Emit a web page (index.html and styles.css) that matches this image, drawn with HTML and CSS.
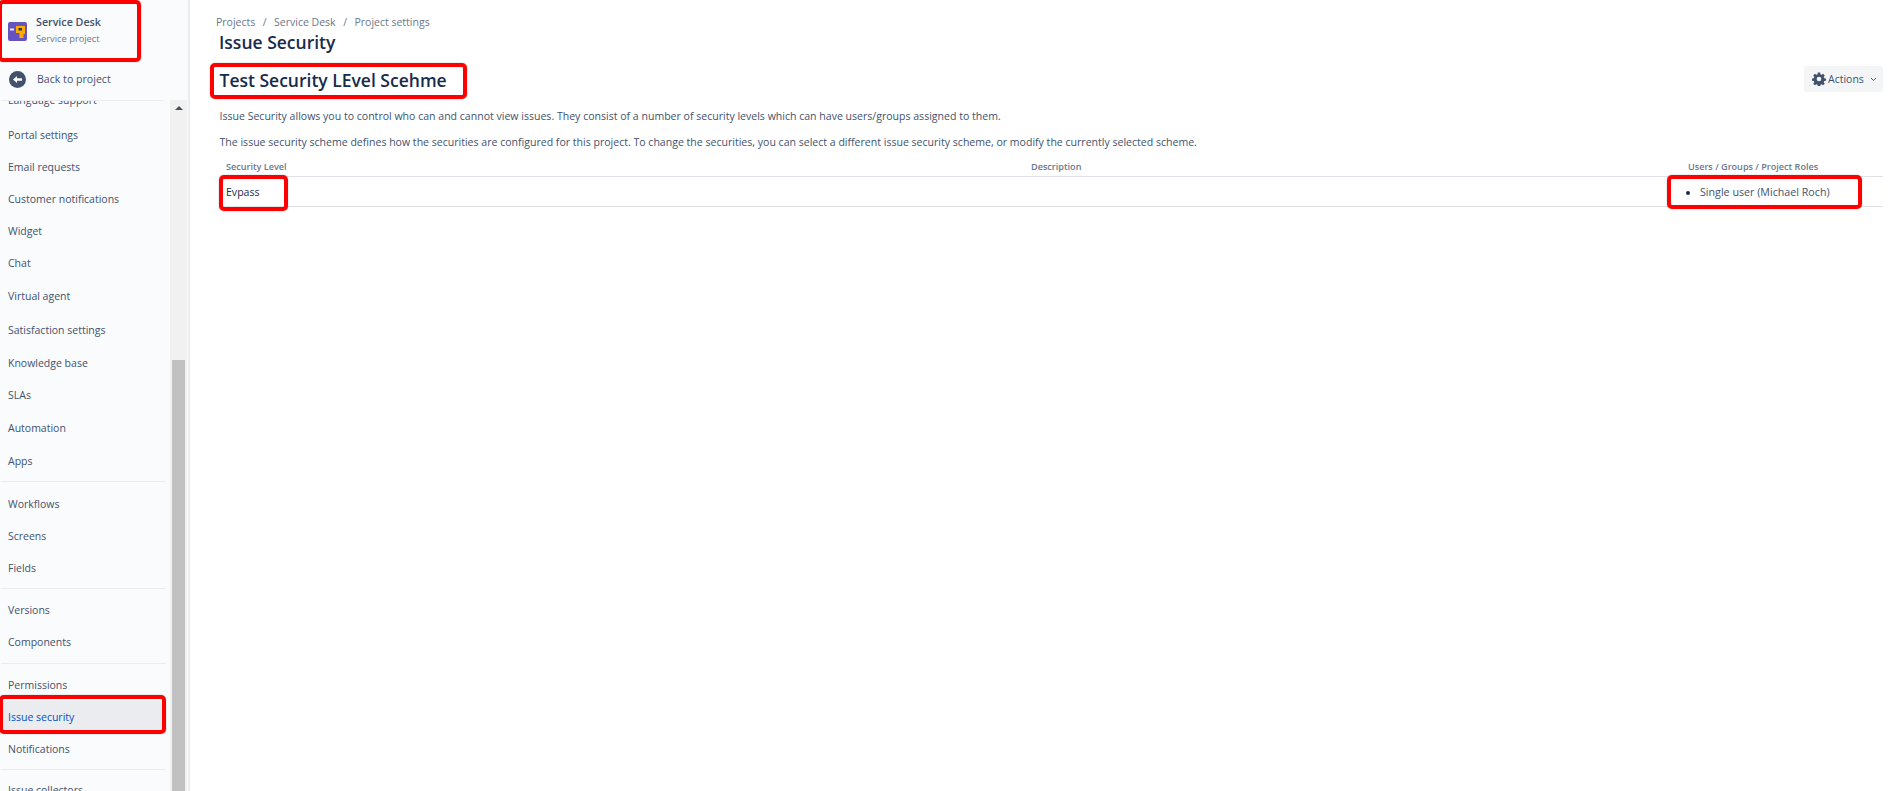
FILE: index.html
```html
<!DOCTYPE html>
<html lang="en">
<head>
<meta charset="utf-8">
<title>Issue Security</title>
<link rel="stylesheet" href="styles.css">
</head>
<body>
<div class="app">
  <aside class="sidebar">
    <div class="project">
      <svg class="project-icon" width="19" height="19" viewBox="0 0 19 19"><rect width="19" height="19" rx="2" fill="#6554c0"/><rect x="2" y="6.500" width="4" height="2" fill="#deebff"/><path d="M8 4h9v8h-1.500v4h-4v-5H8z" fill="#ffab00"/><rect x="10.500" y="6" width="3.500" height="2.500" fill="#253858"/></svg>
      <div class="project-text">
        <div class="project-name">Service Desk</div>
        <div class="project-type">Service project</div>
      </div>
    </div>
    <div class="back">
      <svg class="back-icon" width="17" height="17" viewBox="0 0 17 17"><circle cx="8.500" cy="8.500" r="8.500" fill="#42526e"/><path d="M4 8.500l4-3.500v2.300h5v2.400H8V12z" fill="#fff"/></svg>
      <span>Back to project</span>
    </div>
    <div class="nav-wrap">
      <div class="nav">
        <ul class="nav-list clipped">
          <li class="item lang">Language support</li>
          <li class="item">Portal settings</li>
          <li class="item">Email requests</li>
          <li class="item">Customer notifications</li>
          <li class="item">Widget</li>
          <li class="item">Chat</li>
          <li class="item tall">Virtual agent</li>
          <li class="item tall">Satisfaction settings</li>
          <li class="item">Knowledge base</li>
          <li class="item">SLAs</li>
          <li class="item tall">Automation</li>
          <li class="item">Apps</li>
        </ul>
        <ul class="nav-list">
          <li class="item">Workflows</li>
          <li class="item">Screens</li>
          <li class="item">Fields</li>
        </ul>
        <ul class="nav-list versions">
          <li class="item">Versions</li>
          <li class="item">Components</li>
        </ul>
        <ul class="nav-list perms">
          <li class="item">Permissions</li>
          <li class="item active">Issue security</li>
          <li class="item">Notifications</li>
        </ul>
        <ul class="nav-list collect">
          <li class="item">Issue collectors</li>
        </ul>
      </div>
      <div class="scrollbar">
        <div class="arrow"></div>
        <div class="thumb"></div>
      </div>
    </div>
  </aside>
  <main class="main">
    <nav class="crumbs"><span>Projects</span><span class="sep">/</span><span>Service Desk</span><span class="sep">/</span><span>Project settings</span></nav>
    <h1 class="title">Issue Security</h1>
    <div class="scheme-row">
      <h2 class="scheme">Test Security LEvel Scehme</h2>
      <button class="actions" type="button">
        <svg width="14" height="14" viewBox="0 0 24 24"><path fill="#42526e" fill-rule="evenodd" d="M10 1h4l.6 3.100 1.900.8L19.100 3.100 21.900 6l-1.800 2.600.8 1.900 3.100.5v4l-3.100.6-.8 1.900 1.800 2.600-2.800 2.800-2.600-1.800-1.900.8-.6 3.100h-4l-.6-3.100-1.900-.8-2.600 1.800L2.100 20.100l1.800-2.600-.8-1.900L0 15v-4l3.100-.5.800-1.900L2.100 6l2.800-2.900 2.600 1.800 1.900-.8zM12 8a4 4 0 1 0 0 8 4 4 0 0 0 0-8z"/></svg>
        <span>Actions</span>
        <svg width="7" height="5" viewBox="0 0 7 5"><path d="M1 1l2.500 2.500L6 1" fill="none" stroke="#42526e" stroke-width="1"/></svg>
      </button>
    </div>
    <p class="intro first">Issue Security allows you to control who can and cannot view issues. They consist of a number of security levels which can have users/groups assigned to them.</p>
    <p class="intro">The issue security scheme defines how the securities are configured for this project. To change the securities, you can select a different issue security scheme, or modify the currently selected scheme.</p>
    <table class="levels">
      <thead>
        <tr><th class="col-level">Security Level</th><th class="col-desc">Description</th><th class="col-users">Users / Groups / Project Roles</th></tr>
      </thead>
      <tbody>
        <tr><td>Evpass</td><td></td><td><ul class="users"><li>Single user (Michael Roch)</li></ul></td></tr>
      </tbody>
    </table>
  </main>
</div>
<div class="mark mark-project"></div>
<div class="mark mark-scheme"></div>
<div class="mark mark-evpass"></div>
<div class="mark mark-users"></div>
<div class="mark mark-nav"></div>
</body>
</html>
```
FILE: styles.css
```css
* { box-sizing: border-box; }
html, body { margin: 0; height: 791px; overflow: hidden; background: #fff; }
body { font-family: "Open Sans", "Noto Sans", sans-serif; font-size: 10.550px; color: #172b4d; }
.app { display: flex; height: 791px; }
.sidebar { width: 190px; flex: none; background: #fafbfc; border-right: 2px solid #ebecf0; display: flex; flex-direction: column; height: 791px; overflow: hidden; }
.project { height: 62px; padding: 0 0 0 8px; display: flex; align-items: center; gap: 9px; }
.project-icon { flex: none; }
.project-text { margin-top: -2px; }
.project-name { font-size: 10.700px; font-weight: 600; color: #42526e; line-height: 16px; }
.project-type { font-size: 9.300px; color: #6b778c; line-height: 16px; margin-top: 1px; }
.back { height: 38px; padding: 0 0 4px 9px; display: flex; align-items: center; gap: 11px; font-size: 10.600px; color: #42526e; }
.back-icon { flex: none; }
.nav-wrap { flex: 1; display: flex; min-height: 0; position: relative; }
.nav { width: 170px; flex: none; overflow: hidden; }
.nav-list { list-style: none; margin: 0; padding: 0; width: 165px; margin-left: 1px; }
.nav-list + .nav-list { border-top: 1px solid #ebecf0; padding-top: 6px; margin-top: 4px; }
.nav-list.versions { padding-top: 5px; }
.nav-list.perms { padding-top: 5px; margin-top: 5px; }
.nav-list.collect { padding-top: 4px; }
.clipped { margin-top: -13px; }
.nav-wrap::before { content: ""; position: absolute; left: 1px; top: 0; width: 163px; height: 1px; background: #ebecf0; }
.item { height: 32px; line-height: 32px; padding-left: 7px; color: #42526e; font-size: 10.500px; }
.item.lang { line-height: 26px; }
.tall { height: 34px; line-height: 34px; }
.active { background: #ebecf0; color: #0052cc; }
.scrollbar { width: 17px; background: #f1f1f1; flex: none; display: flex; flex-direction: column; }
.arrow { height: 17px; position: relative; }
.arrow::after { content: ""; position: absolute; left: 5px; top: 6px; border-left: 4px solid transparent; border-right: 4px solid transparent; border-bottom: 4px solid #505050; }
.thumb { margin: 243px 2px 0 2px; flex: 1; background: #c1c1c1; }
.main { flex: 1; padding: 0 17px 0 26px; min-width: 0; }
.crumbs { display: flex; height: 22px; padding-top: 14px; line-height: 16px; color: #6b778c; font-size: 10.500px; }
.sep { margin: 0 7.500px; }
.title { margin: 8px 0 0 3px; font-size: 17.500px; font-weight: 600; line-height: 24px; color: #172b4d; }
.scheme-row { display: flex; justify-content: space-between; align-items: flex-start; margin-top: 11px; height: 30px; }
.scheme { margin: 0 0 0 3.500px; font-size: 17.500px; font-weight: 600; line-height: 30px; color: #172b4d; }
.actions { display: flex; align-items: center; gap: 2px; height: 26px; width: 79px; margin-top: 1px; padding: 0 0 0 8px; border: 0; border-radius: 3px; background: #f4f5f7; color: #42526e; font: inherit; font-size: 10.500px; }
.actions svg:last-child { margin-left: 4px; }
.intro { margin: 0 0 0 3.500px; line-height: 16px; color: #42526e; }
.intro.first { margin-top: 13px; }
.intro + .intro { margin-top: 10px; }
.levels { border-collapse: collapse; table-layout: fixed; margin-top: 7px; margin-left: 4px; width: calc(100% - 4px); }
.levels th { font-size: 9.100px; font-weight: 600; color: #6b778c; text-align: left; height: 19px; padding: 0 0 0 6px; border-bottom: 1px solid #dfe1e6; }
.col-level { width: 805px; }
.col-desc { width: 657px; }
.levels td { height: 30px; padding: 1px 0 0 6px; color: #172b4d; border-bottom: 1px solid #dfe1e6; vertical-align: middle; }
.users { margin: 0; padding: 0 0 0 12px; color: #42526e; font-size: 10.700px; }
.users li::marker { color: #172b4d; }
.mark { position: absolute; border: 4px solid #f00; border-radius: 5px; box-shadow: 0 0 1px #555; }
.mark-project { left: -2px; top: 0; width: 143px; height: 62px; }
.mark-scheme { left: 210px; top: 63px; width: 257px; height: 36px; }
.mark-evpass { left: 219px; top: 175px; width: 69px; height: 36px; }
.mark-users { left: 1667px; top: 175px; width: 195px; height: 34px; }
.mark-nav { left: -1px; top: 695px; width: 167px; height: 39px; }
```
